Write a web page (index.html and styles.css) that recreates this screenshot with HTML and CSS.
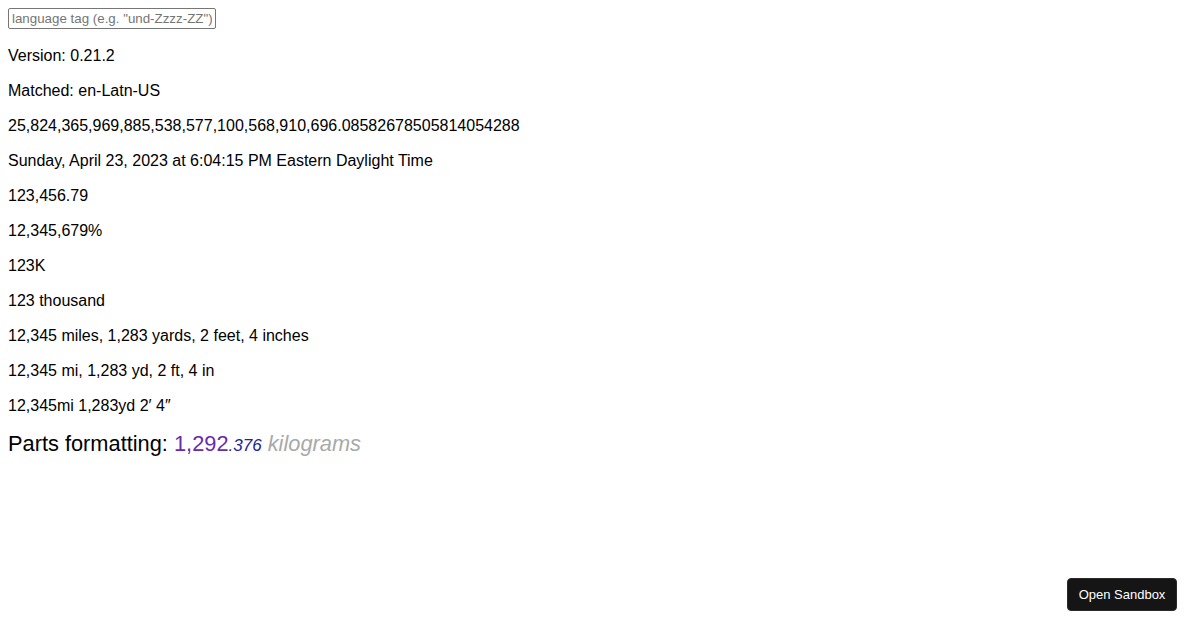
FILE: index.html
```html
<!DOCTYPE html>
<html lang="en">
<head>
<meta charset="utf-8">
<title>Intl formatting</title>
<link rel="stylesheet" href="styles.css">
</head>
<body>
<div class="field"><input class="tag-input" type="text" placeholder="language tag (e.g. &quot;und-Zzzz-ZZ&quot;)"></div>
<p class="line">Version: 0.21.2</p>
<p class="line">Matched: en-Latn-US</p>
<p class="line">25,824,365,969,885,538,577,100,568,910,696.08582678505814054288</p>
<p class="line">Sunday, April 23, 2023 at 6:04:15 PM Eastern Daylight Time</p>
<p class="line">123,456.79</p>
<p class="line">12,345,679%</p>
<p class="line">123K</p>
<p class="line">123 thousand</p>
<p class="line">12,345 miles, 1,283 yards, 2 feet, 4 inches</p>
<p class="line">12,345 mi, 1,283 yd, 2 ft, 4 in</p>
<p class="line">12,345mi 1,283yd 2′ 4″</p>
<p class="parts">Parts formatting: <span class="integer">1,292</span><span class="fraction">.376</span> <span class="unit">kilograms</span></p>
<button class="sandbox" type="button">Open Sandbox</button>
</body>
</html>
```
FILE: styles.css
```css
body {
  margin: 8px;
  font-family: "Liberation Sans", Arial, sans-serif;
  font-size: 16px;
  color: #000;
  background: #fff;
}
.field {
  height: 22px;
}
.tag-input {
  box-sizing: border-box;
  width: 208px;
  height: 21px;
  margin: 0;
  padding: 1px 3px;
  font-family: "Liberation Sans", Arial, sans-serif;
  font-size: 13.33px;
  border: 1px solid #767676;
  border-radius: 2px;
  vertical-align: top;
}
.tag-input::placeholder {
  color: #757575;
}
.line {
  margin: 16px 0;
  line-height: 19px;
}
.parts {
  margin: 16px 0;
  font-size: 21.8px;
  line-height: 25px;
}
.integer {
  color: #6a2aa8;
}
.fraction {
  color: #22229a;
  font-style: italic;
  font-size: 17px;
}
.unit {
  color: #a9a9a9;
  font-style: italic;
}
.sandbox {
  position: fixed;
  right: 23px;
  bottom: 19px;
  width: 110px;
  height: 33px;
  background: #151515;
  color: #fff;
  border: 1px solid #2a2a2a;
  border-radius: 4px;
  font-family: "Liberation Sans", Arial, sans-serif;
  font-size: 13px;
  padding: 0;
}
```
